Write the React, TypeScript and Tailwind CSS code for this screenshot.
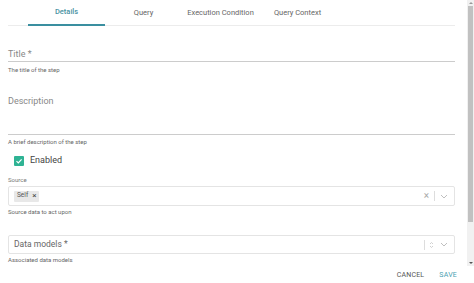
import React from "react";

function Chevron() {
  return (
    <svg width="8" height="5" viewBox="0 0 8 5" fill="none">
      <path d="M1 1l3 3 3-3" stroke="#b8b8b8" strokeWidth="0.9" />
    </svg>
  );
}

export default function App() {
  return (
    <div className="w-[474px] h-[283px] bg-white overflow-hidden flex flex-col text-[#333]" style={{ fontFamily: "Roboto, 'Liberation Sans', sans-serif" }}>
      <div className="flex h-[266px]">
        <div className="flex-1 pl-[8px] pr-[12px] flex flex-col">
          {/* Tabs */}
          <div className="flex border-b border-[#ececec] pl-[20px] h-[26px]">
            <div className="w-[77px] flex items-center justify-center text-[7.5px] font-medium text-[#4a93a3] border-b-[2px] border-[#3a8fa0] -mb-px">Details</div>
            <div className="w-[77px] flex items-center justify-center text-[7.5px] text-[#666]">Query</div>
            <div className="w-[77px] flex items-center justify-center text-[7.5px] text-[#666]">Execution Condition</div>
            <div className="w-[77px] flex items-center justify-center text-[7.5px] text-[#666]">Query Context</div>
          </div>

          {/* Title */}
          <div className="mt-[22px] text-[9px] text-[#888] leading-[12px]">Title *</div>
          <div className="mt-[1px] h-[1px] bg-[#cccccc]" />
          <div className="mt-[4px] text-[6px] text-[#666] leading-[8px]">The title of the step</div>

          {/* Description */}
          <div className="mt-[21px] text-[9px] text-[#888] leading-[12px]">Description</div>
          <div className="mt-[27px] h-[1px] bg-[#cccccc]" />
          <div className="mt-[3px] text-[6px] text-[#666] leading-[8px]">A brief description of the step</div>

          {/* Enabled */}
          <div className="mt-[9px] flex items-center gap-[6px] pl-[6px] h-[12px]">
            <div className="w-[10px] h-[10px] rounded-[1px] bg-[#2fb394] flex items-center justify-center">
              <svg width="8" height="8" viewBox="0 0 8 8" fill="none">
                <path d="M1.5 4.2l1.8 1.8 3.3-3.6" stroke="white" strokeWidth="1.2" />
              </svg>
            </div>
            <span className="text-[9px] text-[#444]">Enabled</span>
          </div>

          {/* Source */}
          <div className="mt-[9px] text-[6px] text-[#777] leading-[8px]">Source</div>
          <div className="mt-[2px] h-[20px] border border-[#e4e4e4] rounded-[2px] flex items-center pl-[5px] pr-[6px]">
            <div className="h-[11px] bg-[#e8e8e8] rounded-[1px] flex items-center px-[3px] gap-[4px]">
              <span className="text-[6.5px] text-[#555]">Self</span>
              <span className="text-[8px] text-[#444] leading-none">×</span>
            </div>
            <div className="flex-1" />
            <span className="text-[10px] text-[#aaa] leading-none mr-[5px]">×</span>
            <div className="w-px h-[10px] bg-[#ddd] mr-[5px]" />
            <Chevron />
          </div>
          <div className="mt-[2px] text-[6px] text-[#666] leading-[8px]">Source data to act upon</div>

          {/* Data models */}
          <div className="mt-[19px] h-[19px] border border-[#e4e4e4] rounded-[2px] flex items-center pl-[5px] pr-[6px]">
            <span className="text-[8.5px] text-[#666]">Data models *</span>
            <div className="flex-1" />
            <div className="w-px h-[10px] bg-[#ddd] mr-[4px]" />
            <svg width="5" height="8" viewBox="0 0 5 8" fill="none" className="mr-[6px]">
              <path d="M1 3l1.5-1.5L4 3M1 5l1.5 1.5L4 5" stroke="#c4c4c4" strokeWidth="0.8" />
            </svg>
            <Chevron />
          </div>
          <div className="mt-[2px] text-[6px] text-[#666] leading-[8px]">Associated data models</div>
        </div>

        {/* Scrollbar */}
        <div className="w-[7px] bg-[#f1f1f1] flex flex-col">
          <div className="h-[6px] flex items-center justify-center">
            <div className="w-0 h-0 border-l-[2px] border-r-[2px] border-b-[2px] border-l-transparent border-r-transparent border-b-[#999]" />
          </div>
          <div className="h-[216px] bg-[#c1c1c1] mx-px" />
          <div className="flex-1" />
          <div className="h-[6px] flex items-center justify-center">
            <div className="w-0 h-0 border-l-[2px] border-r-[2px] border-t-[2px] border-l-transparent border-r-transparent border-t-[#555]" />
          </div>
        </div>
      </div>

      {/* Footer */}
      <div className="flex-1 flex items-start pt-[4px] justify-end pr-[17px] gap-[15px]">
        <span className="text-[7px] text-[#555] tracking-[0.2px]">CANCEL</span>
        <span className="text-[7px] text-[#4aa0b0] tracking-[0.2px]">SAVE</span>
      </div>
    </div>
  );
}
